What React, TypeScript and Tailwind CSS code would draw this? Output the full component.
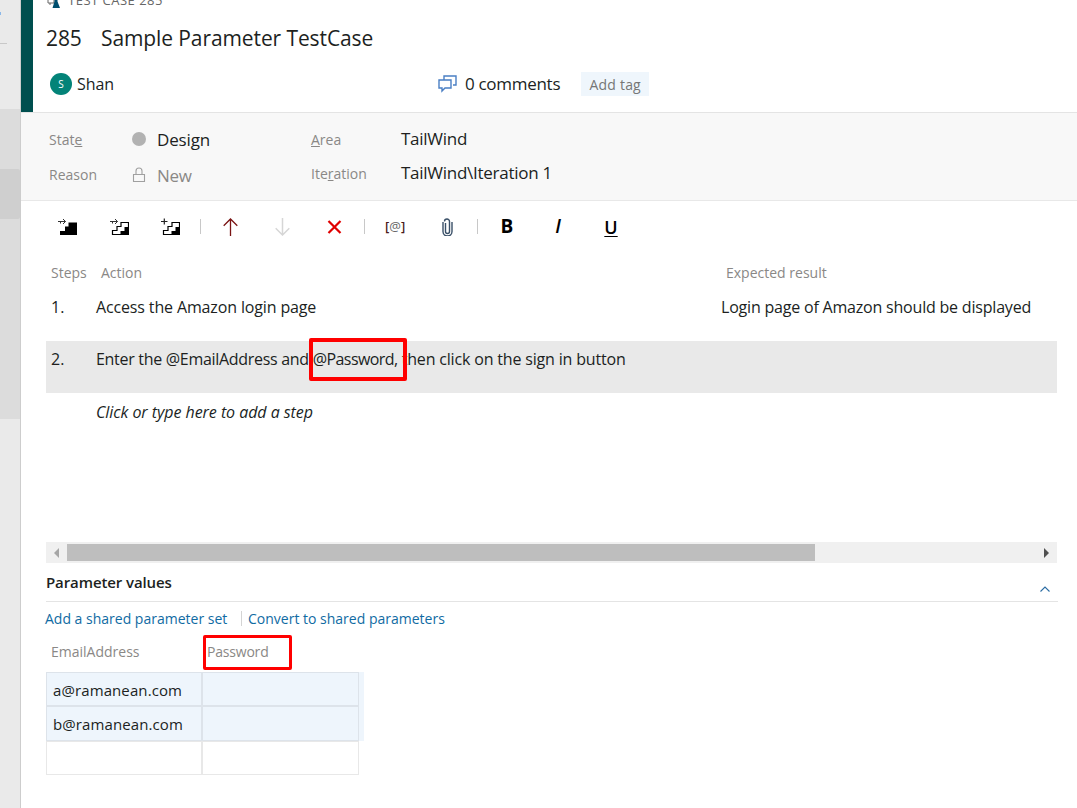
const font = "font-['Open_Sans','Noto_Sans',sans-serif]";

const Sidebar = () => (
  <div className="w-[21px] shrink-0 h-[808px] flex flex-col bg-[#eaeaea] border-r border-r-[#cdcdcd]">
    <div className="h-[109px] pt-[12px]">
      <div className="w-[1px] h-[3px] bg-[#8cb8e8]"></div>
      <div className="mt-[28px] w-[7px] h-[1px] bg-[#c8c8c8]"></div>
    </div>
    <div className="h-[310px] bg-[#dcdcdc] pt-[60px]">
      <div className="h-[50px] bg-[#cfcfcf] rounded-r-[2px]"></div>
    </div>
  </div>
);

const Sep = ({ className }: { className: string }) => <div className={`w-px h-[15px] bg-[#c8c8c8] ${className}`}></div>;

const Arrow = () => <path d="M0 3.500h7.500M5 1l2.500 2.500L5 6M2.500 3.500v2" fill="none" stroke="#333" strokeWidth="1" />;

const OutlineStairs = () => (
  <>
    <path d="M2.500 16.500v-4h4.500v-4h4v-4h7.500v12z" fill="#fff" stroke="#000" strokeWidth="1.200" />
    <path d="M10.500 17v-4h4v-4h4.500v8z" fill="#000" />
  </>
);

const StairIcon = ({ kind, className }: { kind: "one" | "two" | "plus"; className: string }) => (
  <svg className={className} width="19" height="17" viewBox="0 0 19 17">
    {kind === "one" && (
      <>
        <Arrow />
        <path d="M2 17v-4h5V8.500h3.500V4.500H19V17z" fill="#000" />
      </>
    )}
    {kind === "two" && (
      <>
        <Arrow />
        <OutlineStairs />
      </>
    )}
    {kind === "plus" && (
      <>
        <path d="M0 3.500h6.500M3.300 0.500v6" fill="none" stroke="#222" strokeWidth="1.200" />
        <OutlineStairs />
      </>
    )}
  </svg>
);

const Toolbar = () => (
  <div className="h-[51px] flex items-center pl-[12px]">
    <StairIcon kind="one" className="shrink-0" />
    <StairIcon kind="two" className="ml-[33px] shrink-0" />
    <StairIcon kind="plus" className="ml-[32px] shrink-0" />
    <Sep className="ml-[20px]" />
    <svg className="ml-[22px]" width="15" height="18" viewBox="0 0 15 18">
      <path d="M7.500 18V1M0.700 7.800L7.500 1l6.800 6.800" fill="none" stroke="#7a1414" strokeWidth="1.300" />
    </svg>
    <svg className="ml-[37px]" width="15" height="18" viewBox="0 0 15 18">
      <path d="M7.500 0v17M0.700 10.200L7.500 17l6.800-6.800" fill="none" stroke="#d6d6d6" strokeWidth="1.500" />
    </svg>
    <svg className="ml-[37px]" width="15" height="14" viewBox="0 0 15 14">
      <path d="M1.500 1l12 12M13.500 1l-12 12" fill="none" stroke="#e00000" strokeWidth="2.200" />
    </svg>
    <Sep className="ml-[22px]" />
    <span className="ml-[20px] w-[20px] text-[13px] text-[#4a1a1a] font-semibold leading-none text-center whitespace-nowrap">
      [<span className="text-[#666] font-normal">@</span>]
    </span>
    <svg className="ml-[37px]" width="11" height="18" viewBox="0 0 11 18">
      <path d="M3.500 5v8.500a2 2 0 0 0 4 0V3.500a2.500 2.500 0 0 0-5 0M1 4v9.500a4.500 4.500 0 0 0 9 0V4" fill="none" stroke="#3a5068" strokeWidth="1.400" />
    </svg>
    <Sep className="ml-[24px]" />
    <span className="ml-[22px] w-[14px] text-[19px] font-bold text-black leading-none text-center">B</span>
    <span className="ml-[40px] w-[8px] text-[19px] italic font-semibold text-black leading-none text-center">I</span>
    <span className="ml-[42px] w-[14px] text-[18px] font-semibold text-black leading-[20px] text-center underline underline-offset-2">U</span>
  </div>
);

const Field = ({ label, u, after, w }: { label: string; u: string; after: string; w: string }) => (
  <span className={`${w} text-[14px] text-[#8a8886]`}>
    {label}
    <span className="underline">{u}</span>
    {after}
  </span>
);

const Cell = ({ text, blue, last, tall }: { text?: string; blue?: boolean; last?: boolean; tall?: boolean }) => (
  <div
    className={`${tall ? "h-[35px]" : "h-[34px]"} flex items-center pl-[6px] pt-[2px] text-[15px] tracking-[0.1px] text-[#201f1e] ${last ? "w-[157px]" : "w-[156px]"} border ${blue ? "bg-[#eef5fc] border-[#dde3ea]" : "bg-white border-[#e8e8e8]"}`}
  >
    {text}
  </div>
);

export default function App() {
  return (
    <div className={`${font} w-[1077px] h-[808px] overflow-hidden bg-white flex text-[#201f1e]`}>
      <Sidebar />
      <div className="flex-1 flex flex-col min-w-0">
        <div className="h-[113px] border-b border-[#e4e4e4] flex">
          <div className="w-[12px] h-[112px] bg-[#004f4f] shrink-0"></div>
          <div className="pl-[13px] flex-1">
            <div className="h-[8px] overflow-hidden flex items-end gap-[7px]">
              <svg className="ml-[1px] shrink-0" width="14" height="9" viewBox="0 0 14 9">
                <path d="M1 -2h6v6H1zM3 4v2" fill="none" stroke="#666" />
                <path d="M7.500 0h3v2.500L13 9H5.500l2-6.500z" fill="#004e6e" />
              </svg>
              <span className="text-[13px] leading-[13px] mb-[1px] tracking-[0.5px] text-[#666] whitespace-nowrap">TEST CASE 285</span>
            </div>
            <div className="mt-[14px] text-[21px] leading-[32px] flex whitespace-nowrap tracking-[-0.1px]">
              <span className="w-[55px]">285</span>
              <span>Sample Parameter TestCase</span>
            </div>
            <div className="mt-[18px] h-[24px] flex items-center pl-[4px]">
              <div className="w-[22px] h-[22px] rounded-full bg-[#038378] text-white text-[10px] flex items-center justify-center">S</div>
              <span className="ml-[5px] text-[16px] tracking-[-0.1px]">Shan</span>
              <svg className="ml-[324px]" width="19" height="18" viewBox="0 0 19 18">
                <path d="M6 4.500V1h12v9h-3M1 5h12v8H7l-3 3v-3H1z" fill="none" stroke="#4a7fc4" strokeWidth="1.400" />
              </svg>
              <span className="ml-[8px] text-[17px] tracking-[-0.28px]">0 comments</span>
              <span className="ml-[21px] h-[24px] w-[68px] bg-[#eff6fc] text-[14px] tracking-[0.2px] text-[#767676] flex items-center justify-center">Add tag</span>
            </div>
          </div>
        </div>

        <div className="h-[88px] bg-[#f8f8f8] border-b border-[#e8e8e8] pl-[28px] pt-[8px]">
          <div className="h-[36px] flex items-center">
            <Field label="Stat" u="e" after="" w="w-[83px]" />
            <span className="w-[14px] h-[14px] rounded-full bg-[#b2b2b2]"></span>
            <span className="ml-[11px] mt-[2px] w-[154px] text-[17px] tracking-[-0.15px]">Design</span>
            <span className="w-[90px]">
              <Field label="" u="A" after="rea" w="" />
            </span>
            <span className="text-[17px] tracking-[-0.27px]">TailWind</span>
          </div>
          <div className="h-[35px] flex items-center">
            <Field label="Reason" u="" after="" w="w-[83px]" />
            <svg width="14" height="16" viewBox="0 0 14 16">
              <path d="M1.500 7.500h11v7h-11zM4 7.500V4a3 3 0 0 1 6 0v3.500" fill="none" stroke="#a0a0a0" strokeWidth="1.100" />
            </svg>
            <span className="ml-[11px] mt-[2px] w-[154px] text-[17px] tracking-[-0.3px] text-[#8a8886]">New</span>
            <span className="w-[90px] relative -top-[2px]">
              <Field label="Ite" u="r" after="ation" w="" />
            </span>
            <span className="text-[17px] tracking-[-0.27px] relative -top-[2px]">TailWind\Iteration 1</span>
          </div>
        </div>

        <div className="pl-[25px] flex-1 flex flex-col">
          <Toolbar />
          <div className="h-[40px] pl-[5px] flex items-center text-[14px] text-[#8a8886]">
            <span className="w-[50px]">Steps</span>
            <span className="w-[625px]">Action</span>
            <span>Expected result</span>
          </div>
          <div className="h-[49px] w-[1011px] pl-[5px] pb-[19px] flex items-center text-[16px]">
            <span className="w-[45px]">1.</span>
            <span className="w-[625px] tracking-[-0.14px]">Access the Amazon login page</span>
            <span className="whitespace-nowrap tracking-[-0.2px]">Login page of Amazon should be displayed</span>
          </div>
          <div className="h-[52px] w-[1011px] bg-[#e9e9e9] pl-[5px] pb-[16px] flex items-center text-[16px] relative">
            <span className="w-[45px]">2.</span>
            <span className="whitespace-pre">
              <span className="tracking-[-0.3px]">Enter the @EmailAddress and </span>
              <span className="tracking-[-0.56px]">@Password,</span>
              <span className="tracking-[-0.17px]"> then click on the sign in button</span>
            </span>
            <div className="absolute left-[263px] top-[-3px] w-[98px] h-[43px] border-[4px] border-[#ff0000] rounded-[2px]"></div>
          </div>
          <div className="h-[38px] pl-[50px] flex items-center text-[16px] tracking-[-0.05px] italic">Click or type here to add a step</div>

          <div className="mt-[111px] h-[21px] w-[1011px] bg-[#f0f0f0] flex items-center">
            <div className="w-[21px] flex justify-center">
              <div className="w-0 h-0 border-y-[5px] border-y-transparent border-r-[5px] border-r-[#a6a6a6]"></div>
            </div>
            <div className="w-[748px] h-[17px] bg-[#bebebe]"></div>
            <div className="flex-1 flex justify-end pr-[8px]">
              <div className="w-0 h-0 border-y-[5px] border-y-transparent border-l-[5px] border-l-[#505050]"></div>
            </div>
          </div>

          <div className="h-[39px] w-[1012px] border-b border-[#e4e4e4] flex items-center justify-between pr-[8px]">
            <span className="text-[15px] font-semibold tracking-[-0.1px] pt-[1px]">Parameter values</span>
            <svg className="self-end mb-[9px]" width="10" height="6" viewBox="0 0 10 6">
              <path d="M0.500 5.500L5 1l4.500 4.500" fill="none" stroke="#2b6ca3" strokeWidth="1.100" />
            </svg>
          </div>

          <div className="h-[33px] -ml-[1px] flex items-center text-[14px] text-[#106ba3]">
            <span className="w-[196px]">Add a shared parameter set</span>
            <div className="w-px h-[15px] bg-[#d4d4d4] mr-[6px]"></div>
            <span>Convert to shared parameters</span>
          </div>

          <div className="h-[37px] pb-[4px] flex items-center text-[14px] text-[#8a8886] relative">
            <span className="w-[161px] pl-[5px]">EmailAddress</span>
            <span className="tracking-[-0.2px]">Password</span>
            <div className="absolute left-[157px] top-[0px] w-[89px] h-[35px] border-[3px] border-[#ff0000] rounded-[2px]"></div>
          </div>

          <div className="relative w-[318px]">
            <div className="absolute left-0 top-0 w-[318px] h-[69px] bg-[#eef5fc]"></div>
            <div className="relative flex"><Cell text="a@ramanean.com" blue /><Cell blue last /></div>
            <div className="relative flex"><Cell text="b@ramanean.com" blue tall /><Cell blue last tall /></div>
            <div className="relative flex"><Cell /><Cell last /></div>
          </div>
        </div>
      </div>
    </div>
  );
}
